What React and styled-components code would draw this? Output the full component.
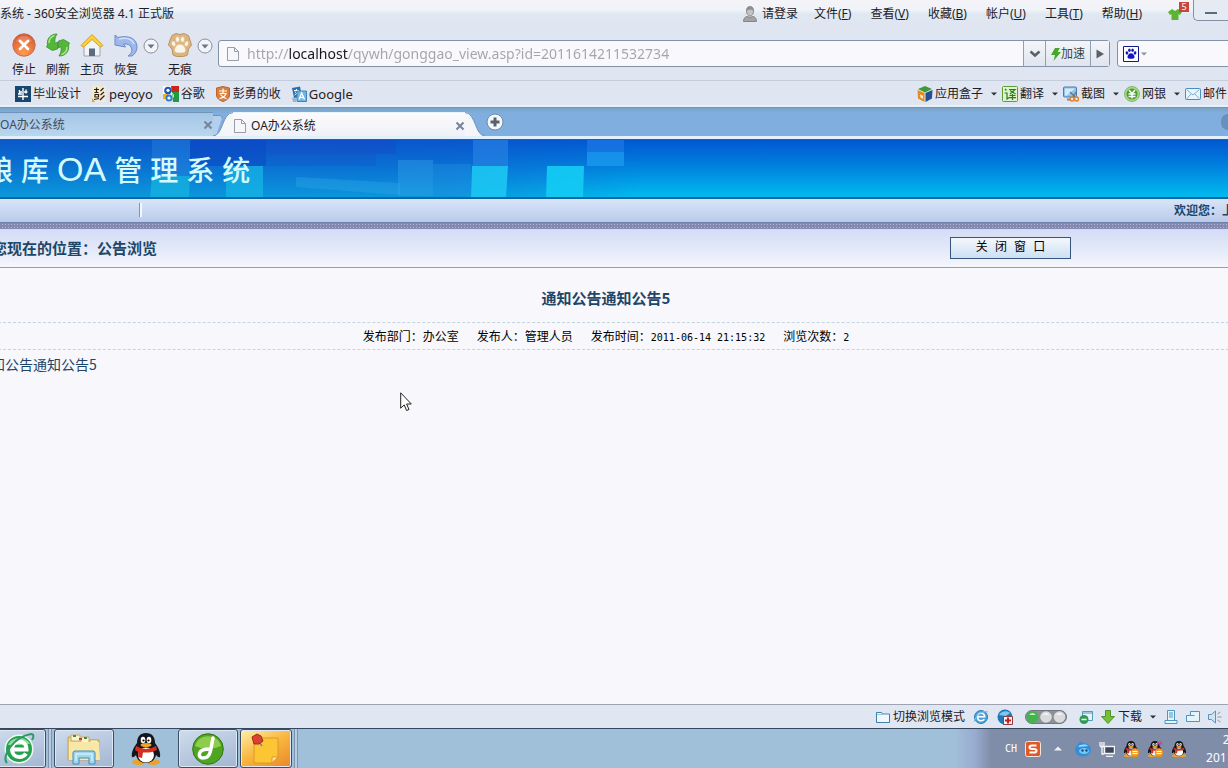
import React from 'react'
import styled, { createGlobalStyle } from 'styled-components'

const GlobalStyle = createGlobalStyle`
  * {
    box-sizing: border-box;
  }
  body {
    margin: 0;
    overflow: hidden;
    font: 12px/16px 'Noto Sans', 'Noto Sans CJK SC', sans-serif;
    color: #1c2026;
    background: #f8f7fb;
  }
  button, input {
    font: inherit;
    color: inherit;
    margin: 0;
    padding: 0;
    border: 0;
    background: none;
  }
  a {
    color: inherit;
    text-decoration: none;
  }
  h1, h2, p {
    margin: 0;
  }
  svg {
    display: block;
    flex: none;
  }
`

/* ---------- icons ---------- */

const Svg = ({ w = 16, h = 16, box, children }) => (
  <svg width={w} height={h} viewBox={box || `0 0 ${w} ${h}`} aria-hidden='true'>
    {children}
  </svg>
)

const UserIcon = () => (
  <Svg>
    <path d='M4.500 5C4.500 1.500 6 .5 8 .5s3.500 1 3.500 4.500C11.500 8 10 10 8 10S4.500 8 4.500 5z' fill='#c3c3c3' stroke='#8e8e8e' />
    <path d='M4.500 4.500C4.500 1.500 6 .5 8 .5s3.500 1 3.500 4L9 3.500z' fill='#8f8f8f' />
    <path d='M1.500 15.500c0-3.500 2-5 4-5l2.500 1 2.500-1c2 0 4 1.500 4 5z' fill='#a4a4a4' stroke='#858585' />
  </Svg>
)

const ShirtIcon = () => (
  <Svg w={14} h={14}>
    <path d='M4 2l3 2 3-2 4 3-2 3-1.500-1V13h-7V7L2 8 0 5z' fill='#5cb431' />
  </Svg>
)

const StopIcon = () => (
  <Svg w={24} h={24}>
    <defs>
      <radialGradient id='stop' cx='.5' cy='.85' r='.8'>
        <stop offset='0' stopColor='#ff9d4d' />
        <stop offset='1' stopColor='#d95a35' />
      </radialGradient>
    </defs>
    <circle cx='12' cy='12' r='11.200' fill='url(#stop)' stroke='#c0705a' />
    <path d='M4 8a9 9 0 0 1 16 0q-8 4-16 0z' fill='#fff' opacity='.2' />
    <path d='M8 8l8 8M16 8l-8 8' stroke='#fff' strokeWidth='2.600' strokeLinecap='round' />
  </Svg>
)

const LeafArrow = () => (
  <>
    <path d='M11 1C4 1 .5 6 1.500 12L.5 14l6 3.500 5-1.500V9L9 10.500C8.500 7 9 4 11 1z' fill='#53b83a' stroke='#3a8f2c' strokeWidth='.8' strokeLinejoin='round' />
    <path d='M3 10C3 6 5 3.500 8.500 2.500' stroke='#a9e58c' strokeWidth='1.500' fill='none' />
  </>
)

const RefreshIcon = () => (
  <Svg w={24} h={24}>
    <LeafArrow />
    <g transform='rotate(180 12 12)'><LeafArrow /></g>
  </Svg>
)

const HomeIcon = () => (
  <Svg w={24} h={24}>
    <path d='M4 11l8-7 8 7v12H4z' fill='#f1f3f7' stroke='#9aa3b0' />
    <path d='M9 15.500h6V23H9z' fill='#5b6b82' />
    <path d='M1 12.500L12 1.500l11 11-2.500 1.500L12 6.500 3.500 14z' fill='#fbcf3f' stroke='#d7a21f' strokeLinejoin='round' />
  </Svg>
)

const UndoIcon = () => (
  <Svg w={24} h={24}>
    <path
      d='M1 2l3 2.500C14 2 23 5 23 14c0 4-2 7-5 9h-4c3-2 4.500-5 3.500-8-1-3-4-4.500-8-4l2 3L1 12z'
      fill='#9db8ec'
      stroke='#6e8ac6'
      strokeLinejoin='round'
    />
    <path d='M5 6c7-1.500 13 0 15 5' stroke='#d3e0fa' strokeWidth='1.500' fill='none' />
  </Svg>
)

const Pads = ({ fill, stroke }) => (
  <g fill={fill} stroke={stroke}>
    <ellipse cx='4' cy='10.500' rx='2.600' ry='3.500' transform='rotate(-20 4 10.500)' />
    <ellipse cx='9' cy='5' rx='2.600' ry='3.700' />
    <ellipse cx='15.500' cy='5' rx='2.600' ry='3.700' />
    <ellipse cx='20.500' cy='10.500' rx='2.600' ry='3.500' transform='rotate(20 20.500 10.500)' />
    <path d='M12.200 11c4 0 7.300 4.500 7.300 8s-3.500 3.500-7.300 3.500S5 22.500 5 19s3.200-8 7.200-8z' />
  </g>
)

const TraceIcon = () => (
  <Svg w={24} h={24}>
    <path d='M4 2.500L8 .5l4 1 4-1 4.500 2L22 7l1.500 5-3 4-1 6-4 1.500h-7L5 22l-1-6-3.500-4L2 7z' fill='#dbb581' stroke='#bd9563' strokeLinejoin='round' />
    <g transform='translate(2.500 2.500) scale(.78)'>
      <Pads fill='#fdf6e8' stroke='#dcb984' />
    </g>
  </Svg>
)

const BaiduIcon = () => (
  <Svg>
    <path d='M.5.5h15v15H.5z' fill='#fff' stroke='#101a8c' />
    <g transform='translate(2 1.800) scale(.49)'>
      <Pads fill='#1414c8' />
    </g>
  </Svg>
)

const RoundArrow = () => (
  <Svg>
    <circle cx='8' cy='8' r='7' fill='#f2f4f8' stroke='#8590a3' />
    <path d='M4.500 6.500h7L8 10.500z' fill='#6a7688' />
  </Svg>
)

const PageIcon = () => (
  <Svg w={14} h={16}>
    <path d='M1.500 1.500h7l4 4v9h-11z' fill='#f6f7fb' stroke='#989da8' />
    <path d='M8.500 1.500v4h4' fill='none' stroke='#989da8' />
  </Svg>
)

const Caret = ({ color = '#2b3038' }) => (
  <Svg w={6} h={4}>
    <path d='M0 .5h6l-3 3z' fill={color} />
  </Svg>
)

const ChevronIcon = () => (
  <Svg w={12} h={8}>
    <path d='M1.500 1.500L6 5.500l4.500-4' stroke='#5a6068' strokeWidth='2.500' fill='none' />
  </Svg>
)

const BoltIcon = () => (
  <Svg w={10} h={14}>
    <path d='M4 1h5L6.500 5H10L2.500 14 4 8H0z' fill='#46a82b' />
  </Svg>
)

const PlayIcon = () => (
  <Svg w={8} h={10}>
    <path d='M.5.5L8 5 .5 9.500z' fill='#5a6068' />
  </Svg>
)

const CloseIcon = () => (
  <Svg w={10} h={10}>
    <path d='M1.500 1.500l7 7M8.500 1.500l-7 7' stroke='#76839a' strokeWidth='2' />
  </Svg>
)

const PlusIcon = () => (
  <Svg w={18} h={18}>
    <circle cx='9' cy='9' r='8' fill='#f4f8fc' stroke='#7089a8' />
    <path d='M9 4.500v9M4.500 9h9' stroke='#56606f' strokeWidth='3' />
  </Svg>
)

const DesignMark = () => (
  <Svg>
    <path d='M0 0h16v16H0z' fill='#17476f' />
    <path d='M8 2v12M3 10.500h10M4.500 4v4M4.500 6H7M11 3.500v4M9 6h3.500M3 8h4' stroke='#fff' strokeWidth='1.400' />
  </Svg>
)

const PengMark = () => (
  <Svg>
    <path d='M1 0h14v16H1z' fill='#f3ead2' />
    <path d='M3 3.500h5M5.500 1.500v5M3.500 6.500h4M4 8.500h3.500v2.500H4zM3 13.500l5-1M12.500 2L9.500 5M13 6l-3.500 3M13.500 9.500L9 14' stroke='#2e2013' strokeWidth='1.200' fill='none' />
    <path d='M1 12l3 4H1z' fill='#dba43e' />
  </Svg>
)

const GoogleMark = () => (
  <Svg>
    <path d='M0 0h8v8H0z' fill='#fff' />
    <path d='M8 0h8v6H9z' fill='#c9261c' />
    <path d='M9 6h7v10h-6z' fill='#219a41' />
    <path d='M0 8h5v5H0z' fill='#f0b51d' />
    <circle cx='5' cy='4.500' r='3.800' fill='#2257b5' />
    <circle cx='5' cy='4.300' r='1.600' fill='#fff' />
    <circle cx='6' cy='12' r='3.500' fill='#2d7fc7' />
    <circle cx='6' cy='12' r='1.600' fill='#fff' />
    <path d='M8 6.500c2 1 3 3 2 5' stroke='#fff' fill='none' />
  </Svg>
)

const AlipayMark = () => (
  <Svg>
    <path d='M1.500 2L8 .5 14.500 2v7c0 3-3 5.500-6.500 6.500C4.500 14.500 1.500 12 1.500 9z' fill='#d9803f' stroke='#b9652c' />
    <path d='M4 5h8M8 2.500V7M4.500 7.500h6.500C10 10 8 12 4.500 12.500M5.500 8.500c1.500 2 3.500 3.500 6 4' stroke='#fff' strokeWidth='1.200' fill='none' />
  </Svg>
)

const TranslateMark = () => (
  <Svg>
    <path d='M1 2l8-1.500 2 10L3 12z' fill='#2b6fae' />
    <path d='M3 4.500h5M5.500 3v1.500M7 5c-.5 2-2 3.500-3.500 4M4 5.500c1 2 2 3 4 3.500' stroke='#fff' fill='none' />
    <path d='M6 5h9.500v10.500H6z' fill='#6fb6e2' stroke='#3f86bd' />
    <path d='M8 13.500L10.700 7l2.800 6.500M9 11.500h3.500' stroke='#fff' strokeWidth='1.300' fill='none' />
    <path d='M1 11.500l4 1V16H2z' fill='#9fb3c4' />
  </Svg>
)

const BoxIcon = () => (
  <Svg>
    <path d='M8 0l7 3-7 3.500L1 3z' fill='#3d9b35' />
    <path d='M.5 4L7.500 7v9L1 12.500z' fill='#e88a22' />
    <path d='M15.500 4L8.500 7v9l6.500-3.500z' fill='#23508f' />
    <path d='M3 8.500l3 1.300v3L3.500 11.500z' fill='#fff2d8' />
  </Svg>
)

const YiIcon = () => (
  <Svg>
    <rect x='.5' y='.5' width='15' height='15' rx='1' fill='#dff3cf' stroke='#5c9e3a' />
    <path d='M3 3l1.500 1.500M2.500 7H5v6l2-1.500M7 3.500h6L8 8M8 4.500l5.500 3.500M7.500 9.500h6M7 11.700h7M10.500 8v6' stroke='#2f7a1c' strokeWidth='1.200' fill='none' />
  </Svg>
)

const ShotIcon = () => (
  <Svg>
    <rect x='.5' y='1' width='13' height='10' rx='1' fill='#8fc3ea' stroke='#4a7fac' />
    <path d='M2 2.500h10L4 9.500H2z' fill='#d2e9f9' />
    <path d='M4 13.500h4' stroke='#6a8cab' strokeWidth='2' />
    <path d='M7 6l5 5M13 6l-3 5' stroke='#61758a' strokeWidth='1.400' />
    <circle cx='9' cy='13' r='2' fill='none' stroke='#e5822c' strokeWidth='1.500' />
    <circle cx='13.500' cy='13' r='2' fill='none' stroke='#e5822c' strokeWidth='1.500' />
  </Svg>
)

const BankIcon = () => (
  <Svg>
    <circle cx='8' cy='8' r='7.500' fill='#a7d68a' stroke='#86b86e' />
    <circle cx='8' cy='8' r='5.500' fill='#48a02c' />
    <path d='M5 4l3 3.500L11 4M4.500 8h7M4.500 10.500h7M8 7.500v5' stroke='#fff' strokeWidth='1.500' fill='none' />
  </Svg>
)

const MailIcon = () => (
  <Svg>
    <rect x='.5' y='2.500' width='15' height='11' rx='1' fill='#e9f4fc' stroke='#4a8ebb' />
    <path d='M1.500 3.500L8 9l6.500-5.500M1.500 13l4.500-5M14.500 13L10 8' stroke='#7db0d4' fill='none' />
  </Svg>
)

const FolderIcon = () => (
  <Svg w={14} h={12}>
    <path d='M.5 1.500h5l1 1.500h7v8.500H.5z' fill='#f1f8fd' stroke='#3f7fa9' />
    <path d='M1 3.500h12' stroke='#9cc6e2' />
  </Svg>
)

const IeIcon = () => (
  <Svg>
    <circle cx='8' cy='8' r='6.500' fill='#4aa5dc' stroke='#2d7fb8' />
    <path d='M4.500 7.800h7.200C11.500 5.500 10 4.300 8 4.300S4.500 6 4.500 8s1.300 3.700 3.500 3.700c1.500 0 2.500-.5 3.300-1.500' stroke='#fff' strokeWidth='1.500' fill='none' />
    <path d='M1 13C3 6 10 1 15 3' stroke='#7fc4ea' fill='none' />
  </Svg>
)

const RepairIcon = () => (
  <Svg>
    <circle cx='8' cy='8' r='7.500' fill='#2177b8' />
    <path d='M2 6c2-4 8-5 11-2L9 7z' fill='#7cc6ef' />
    <path d='M6.500 7.500h9v8h-9z' fill='#f4f4f4' stroke='#8b3b3b' />
    <path d='M11 8.500v6M8 11.500h6' stroke='#c81e1e' strokeWidth='2' />
  </Svg>
)

const LightsIcon = () => (
  <Svg w={42} h={14}>
    <rect x='.5' y='.5' width='41' height='13' rx='6.500' fill='#8c9197' stroke='#73787e' />
    <circle cx='7.500' cy='7' r='6' fill='#3fb64a' />
    <circle cx='21' cy='7' r='5.800' fill='#d9dbde' />
    <circle cx='34.500' cy='7' r='5.800' fill='#d9dbde' />
    <path d='M4 5q3.500-4 7 0zM17.500 5q3.500-4 7 0zM31 5q3.500-4 7 0z' fill='#fff' opacity='.7' />
  </Svg>
)

const BlockIcon = () => (
  <Svg w={14} h={14}>
    <path d='M3.500 1.500h10v9h-10z' fill='#e3f3fb' stroke='#4f9cb9' />
    <path d='M3.500 3h10' stroke='#4f9cb9' />
    <circle cx='5' cy='9.500' r='4.500' fill='#2f9a55' />
    <path d='M2.500 9.500h5' stroke='#fff' strokeWidth='1.500' />
  </Svg>
)

const DownIcon = () => (
  <Svg w={14} h={14}>
    <path d='M4.500.5h5v6h4L7 13.500.5 6.500h4z' fill='#76bf38' stroke='#4f9425' />
  </Svg>
)

const ListIcon = () => (
  <Svg w={14} h={14}>
    <path d='M3.500.5h7v10h-7zM1 10.500h12v3H1z' fill='#e6f4fc' stroke='#4e96c4' />
    <path d='M5 3h4M5 5h4M5 7h4' stroke='#4e96c4' />
  </Svg>
)

const SplitIcon = () => (
  <Svg w={14} h={14}>
    <path d='M4.500 1.500h9v10h-13v-6h4z' fill='#e6f4fc' stroke='#4e96c4' />
    <path d='M4.500 1.500v4h4' stroke='#4e96c4' fill='none' />
  </Svg>
)

const SoundIcon = () => (
  <Svg w={14} h={14}>
    <path d='M.5 4.500h3l4-3.500v12l-4-3.500h-3z' fill='#cfe5f3' stroke='#5f93b6' />
    <path d='M9.500 4l3-2M9.500 7h4M9.500 10l3 2' stroke='#8b98a4' />
  </Svg>
)

const SafeBrowserIcon = () => (
  <Svg w={32} h={32}>
    <circle cx='16' cy='16' r='14.500' fill='#eefaf0' />
    <circle cx='16' cy='16' r='13' fill='#24a14c' />
    <path d='M5 12C8 4 22 2 27 11l-10 1z' fill='#8edd9f' />
    <path d='M9 16.500h14.500C23.500 11 20 8.500 16 8.500S9 12 9 16.500 12 24 16.500 24c3 0 5-1 6.500-3.500' stroke='#fff' strokeWidth='4' fill='none' />
    <path d='M4 30C-2 24 10 4 28 1c3 0 3 3 1 6' stroke='#2f9b62' strokeWidth='2' fill='none' />
  </Svg>
)

const ExplorerIcon = () => (
  <Svg w={34} h={32}>
    <path d='M1 4h10l2 3h19v20H1z' fill='#eed48a' stroke='#c2a258' />
    <path d='M4 2h9v6H4zM14 4h8v6h-8zM23 7h8v4h-8z' fill='#fbf3d0' stroke='#c7ab66' />
    <path d='M6 3h3M17 5h3' stroke='#4f8a3c' strokeWidth='2' />
    <path d='M12 6h3' stroke='#b9452f' strokeWidth='2' />
    <path d='M2 9h30l1 18H2z' fill='#f8e7a6' />
    <path d='M6 31V20q0-2 2-2h18q2 0 2 2v11h-6v-6H12v6z' fill='#9fd5ee' stroke='#3f8fb8' />
    <path d='M9 28v-7h16v7' stroke='#e9f9ff' fill='none' />
  </Svg>
)

const Penguin = ({ size = 16, badge }) => (
  <Svg w={size} h={size} box='0 0 32 32'>
    <ellipse cx='9' cy='29' rx='7' ry='3' fill='#e9a22a' />
    <ellipse cx='23' cy='29' rx='7' ry='3' fill='#e9a22a' />
    <path d='M16 0c6 0 9 4 9 10 3 4 6 9 5 14-1 1-3-1-4-2-1 5-5 8-10 8S7 27 6 22c-1 1-3 3-4 2-1-5 2-10 5-14 0-6 3-10 9-10z' fill='#15161c' />
    <ellipse cx='16' cy='22' rx='8' ry='7.500' fill='#fff' />
    <ellipse cx='13' cy='7' rx='2.300' ry='3.200' fill='#fff' />
    <ellipse cx='19' cy='7' rx='2.300' ry='3.200' fill='#fff' />
    <circle cx='13.500' cy='7.500' r='1.100' />
    <circle cx='18.500' cy='7.500' r='1.100' />
    <ellipse cx='16' cy='12' rx='5.500' ry='2' fill='#f0a51f' />
    <path d='M6 13q10 6 20 0l1 4q-5 3-14 2.500l-1 5.500-4-1 .5-5L5 17z' fill='#d22f22' />
    {badge && <circle cx='24' cy='23' r='8' fill='#f3a52d' stroke='#c2741b' />}
    {badge && <path d='M19 21h10M19 25h10' stroke='#fff' strokeWidth='2' />}
    {badge === 'pink' && <path d='M20 1l5 3 5-4v8l-5-2-5 2z' fill='#d23fa2' />}
  </Svg>
)

const MusicIcon = () => (
  <Svg w={32} h={32}>
    <circle cx='16' cy='16' r='15.300' fill='#4ea51f' stroke='#2f7412' />
    <path d='M3 13C6 0 26 0 29 13q-13 6-26 0z' fill='#a4db5c' opacity='.75' />
    <path d='M21 5l-2.500 13c-1 5-4 7-7.500 7-3 0-4-2-3.500-4.500.6-3 4-4.500 10.500-4.500' fill='none' stroke='#fff' strokeWidth='3.500' strokeLinecap='round' />
  </Svg>
)

const NoteIcon = () => (
  <Svg w={32} h={32}>
    <path d='M4 5h24v19l-6 6H4z' fill='#fbc534' stroke='#e0962a' />
    <path d='M28 24h-6v6z' fill='#fde79b' stroke='#e0962a' />
    <path d='M9 9l3 4' stroke='#7b8794' strokeWidth='1.500' />
    <path d='M2 4l5-3 4 2 2 5-4 3-5 0z' fill='#d8422e' stroke='#a52b1f' />
  </Svg>
)

const SogouIcon = () => (
  <Svg>
    <rect x='.5' y='.5' width='15' height='15' rx='2' fill='#df5a27' stroke='#f6e5dc' />
    <path d='M11.500 4.500H7Q4.500 4.500 4.500 6.200T7 8h2q2.500 0 2.500 1.800T9 11.500H4.500' stroke='#fff' strokeWidth='2' fill='none' />
  </Svg>
)

const AliIcon = () => (
  <Svg>
    <path d='M8 2c5 0 8 3 8 7s-4 6.500-8 6.500S0 13 0 9c0-2 1-4 2.500-5L5 .5 8 2z' fill='#2f8fdb' />
    <path d='M3 6c2-3 8-3 10-1z' fill='#a5dbf8' />
    <ellipse cx='9' cy='10' rx='5' ry='3' fill='#7cc6f0' />
    <circle cx='7.500' cy='9.500' r='1.200' fill='#15507f' />
    <circle cx='11.500' cy='9.500' r='1.200' fill='#15507f' />
  </Svg>
)

const NetworkIcon = () => (
  <Svg>
    <path d='M5.500 5.500h10v7h-10z' fill='#3b4658' stroke='#f2f4f8' strokeWidth='1.500' />
    <path d='M7 15.300h7M1 1v3q0 2 2 2t2-2V1M3 1v12h2' stroke='#f2f4f8' strokeWidth='1.300' fill='none' />
  </Svg>
)

/* ---------- browser frame ---------- */

const Window = styled.div`
  display: flex;
  flex-direction: column;
  height: 100vh;
  overflow: hidden;
`

const TitleBar = styled.header`
  display: flex;
  align-items: center;
  height: 28px;
  overflow: hidden;
  background: linear-gradient(#f5f4f8 0, #f0f3f8 10px, #dfe8f1 14px, #dfe5f1);
`

const Caption = styled.h1`
  flex: 1;
  font-size: 12px;
  font-weight: 400;
  white-space: nowrap;
`

const Menu = styled.nav`
  display: flex;
  align-items: center;
  gap: 19px;
  margin-left: 16px;
`

const MenuItem = styled.button`
  display: flex;
  align-items: center;
  gap: 4px;
  white-space: nowrap;
`

const ShirtButton = styled.button`
  position: relative;
  margin: 0 11px 0 26px;
`

const Count = styled.span`
  position: absolute;
  top: -5px;
  left: 11px;
  width: 10px;
  height: 10px;
  font-size: 9px;
  line-height: 10px;
  text-align: center;
  color: #fff;
  background: #c8463c;
`

const Minimize = styled.button`
  display: flex;
  align-items: center;
  justify-content: center;
  align-self: flex-start;
  width: 35px;
  height: 21px;
  border: 1px solid #8390a3;
  border-width: 0 0 1px 1px;
  border-radius: 0 0 0 5px;
  background: #e6ebf3;
  &::after {
    content: '';
    width: 12px;
    height: 2px;
    margin-top: 6px;
    background: #5d6a80;
  }
`

const ToolBar = styled.div`
  display: flex;
  height: 53px;
  padding-left: 7px;
  overflow: hidden;
  background: #dfe5f1;
  border-bottom: 1px solid #c3cddc;
`

const Tool = styled.button`
  display: flex;
  flex-direction: column;
  align-items: center;
  gap: 5px;
  width: 34px;
  padding-top: 5px;
  white-space: nowrap;
`

const ToolMore = styled.button`
  align-self: flex-start;
  padding-top: 10px;
  margin-right: ${({ $gap }) => $gap}px;
`

const AddressBox = styled.div`
  display: flex;
  align-items: center;
  flex: ${({ $grow }) => ($grow ? '1' : '0 0 118px')};
  height: 27px;
  margin: 12px ${({ $grow }) => ($grow ? 7 : -7)}px 0 0;
  padding-left: ${({ $grow }) => ($grow ? 7 : 5)}px;
  gap: ${({ $grow }) => ($grow ? 0 : 2)}px;
  border: 1px solid #8292a8;
  border-radius: 3px;
  background: #f9f8fc;
`

const UrlInput = styled.input`
  flex: 1;
  min-width: 0;
  height: 24px;
  margin-left: 7px;
  font-size: 14px;
  outline: 0;
  color: transparent;
  background: linear-gradient(90deg, #a3a5a8 42px, #16181c 42px, #16181c 101px, #a3a5a8 101px);
  background-clip: text;
`

const SearchInput = styled.input`
  width: 80px;
  outline: 0;
`

const BoxButton = styled.button`
  display: flex;
  align-items: center;
  justify-content: center;
  align-self: stretch;
  width: ${({ $w }) => $w}px;
  border-left: 1px solid #8fa0b4;
  white-space: nowrap;
  color: #3c4148;
  background: linear-gradient(#f4f5f9, #dfe5ee);
`

const BookmarkBar = styled.nav`
  display: flex;
  align-items: center;
  justify-content: space-between;
  height: 26px;
  padding: 2px 0 0 15px;
  overflow: hidden;
  background: #e0e6f1;
  border-bottom: 2px solid #e6f2fb;
`

const Bookmarks = styled.div`
  display: flex;
  gap: 10px;
`

const AppLinks = styled.div`
  display: flex;
  gap: 5px;
  flex: 0 0 311px;
  min-width: 0;
`

const Bookmark = styled.a`
  display: flex;
  align-items: center;
  gap: 2px;
  white-space: nowrap;
  font-size: ${({ $latin }) => ($latin ? 13 : 12)}px;
`

const AppLink = styled.button`
  display: flex;
  flex: none;
  align-items: center;
  gap: 2px;
  white-space: nowrap;
  > svg + span {
    margin-right: 6px;
  }
`

const TabBar = styled.div`
  display: flex;
  align-items: flex-end;
  height: 32px;
  overflow: hidden;
  border-top: 1px solid #7492b2;
  border-bottom: 3px solid #e2f0fb;
  background: linear-gradient(#7ba2c6 0, #80aede 5px);
`

const Tab = styled.div`
  display: flex;
  align-items: center;
  width: ${({ $active }) => ($active ? 232 : 213)}px;
  height: ${({ $active }) => ($active ? 27 : 24)}px;
  margin-bottom: ${({ $active }) => ($active ? -3 : 0)}px;
  border-top: 1px solid ${({ $active }) => ($active ? '#e9f3fb' : '#6f93ba')};
  background: ${({ $active }) => ($active ? 'linear-gradient(#fbfbfd, #edf0f6)' : 'linear-gradient(#a5c6e6, #bad6ef)')};
  color: ${({ $active }) => ($active ? '#1c2026' : '#3d4c60')};
  a {
    flex: 1;
    margin-left: ${({ $active }) => ($active ? 4 : 0)}px;
  }
`

const NewTab = styled.button`
  align-self: center;
  margin-left: 1px;
`

const TabMore = styled.button`
  align-self: center;
  width: 7px;
  height: 16px;
  margin-left: auto;
  border-radius: 8px 0 0 8px;
  background: #6790bd;
`

const EdgeSvg = styled.svg`
  margin-bottom: -3px;
`

const TabEdge = ({ flip }) => (
  <EdgeSvg width='20' height='27' viewBox='0 0 20 27' aria-hidden='true'>
    <g transform={flip ? 'matrix(-1 0 0 1 20 0)' : undefined}>
      {!flip && <path d='M0 3h7q3 0 2 3L3 24H0z' fill='#b2d0ed' />}
      {!flip && <path d='M0 3.500h7q3 0 2 3' fill='none' stroke='#6f93ba' />}
      <path d='M0 24C10 24 9 1 20 0v27H0z' fill='#f5f6fa' />
      <path d='M0 24C10 24 9 1 20 .5' fill='none' stroke='#6f93b8' />
    </g>
  </EdgeSvg>
)

/* ---------- OA page ---------- */

const Page = styled.main`
  flex: 1;
  min-height: 0;
  margin: 0 -16px 0 -32px;
  font-family: 'Noto Sans CJK SC', sans-serif;
  color: #1d4668;
`

const Banner = styled.div`
  position: relative;
  height: 60px;
  padding-left: 17px;
  overflow: hidden;
  border-top: 1px solid #2560a4;
  border-bottom: 2px solid #0b66a8;
  background: linear-gradient(#0058d2, #0080de 45%, #00bbee);
`

const BannerArt = styled.svg`
  position: absolute;
  top: 0;
  left: 32px;
`

const Brand = styled.h2`
  position: relative;
  display: flex;
  align-items: center;
  gap: 8px;
  height: 58px;
  font-size: 28px;
  font-weight: 500;
  line-height: 32px;
  color: #d3fbff;
  b {
    font: 400 34px/36px 'Liberation Sans', sans-serif;
  }
`

const Strip = styled.div`
  display: flex;
  align-items: center;
  justify-content: space-between;
  height: 23px;
  padding: 0 10px 2px 171px;
  font-weight: 700;
  background: linear-gradient(#d8e4f8, #c6d6f1 60%, #b9caea);
  &::before {
    content: '';
    width: 2px;
    height: 14px;
    border-left: 1px solid #8793ac;
    background: #f2f6fd;
  }
`

const Dots = styled.div`
  height: 7px;
  border-top: 1px solid #6f80ab;
  background: radial-gradient(#b3b9d2 1px, transparent 1px) 0 0 / 3px 3px #8489b2;
`

const Crumb = styled.div`
  display: flex;
  align-items: center;
  justify-content: space-between;
  height: 39px;
  padding: 0 173px 0 24px;
  border-bottom: 1px solid #9b9ca6;
  font-size: 15px;
  font-weight: 700;
  background: linear-gradient(#d3dcf5, #e6ebf9 60%, #f6f6fc);
`

const CloseWindow = styled.button`
  width: 121px;
  height: 22px;
  border: 1px solid #35557f;
  font: 12px/20px 'Liberation Mono', 'Noto Sans CJK SC', monospace;
  color: #000;
  background: linear-gradient(#f4f8fd, #cde0f2);
`

const NoticeTitle = styled.h2`
  padding: 20px 0 14px;
  font-size: 15px;
  line-height: 20px;
  text-align: center;
  border-bottom: 1px dashed #c3d5de;
`

const Meta = styled.div`
  display: flex;
  align-items: center;
  justify-content: center;
  gap: 18px;
  height: 27px;
  color: #000;
  border-bottom: 1px dashed #c3d5de;
  time, b {
    font: 10px 'DejaVu Sans Mono', monospace;
  }
`

const Body = styled.p`
  padding: 4px 9px;
  font-size: 14px;
  line-height: 20px;
`

const Pointer = styled.svg`
  position: absolute;
  top: 392px;
  left: 400px;
`

/* ---------- status bar and taskbar ---------- */

const StatusBar = styled.footer`
  display: flex;
  align-items: center;
  justify-content: flex-end;
  gap: 8px;
  height: 24px;
  padding-right: 6px;
  border-top: 1px solid #9da3b0;
  background: #e0e6f2;
`

const StatusItem = styled.button`
  display: flex;
  align-items: center;
  gap: 3px;
  margin-left: ${({ $space }) => ($space ? 4 : 0)}px;
  white-space: nowrap;
`

const TaskBar = styled.div`
  display: flex;
  height: 40px;
  overflow: hidden;
  border-top: 1px solid #35465f;
  background: #a0bfd9;
`

const Task = styled.button`
  display: flex;
  align-items: center;
  justify-content: center;
  flex: none;
  width: ${({ $w }) => $w}px;
  margin-left: ${({ $shift }) => $shift || 0}px;
  border: 1px solid ${({ $kind }) => ($kind === 'idle' ? 'transparent' : '#3d4d66')};
  border-radius: 3px;
  box-shadow: ${({ $kind }) => ($kind === 'idle' ? 'none' : 'inset 0 0 0 1px #dfe8f3')};
  background: ${({ $kind }) =>
    ({
      idle: 'none',
      open: 'linear-gradient(160deg, #cfdcec, #a2b6d3)',
      alert: 'linear-gradient(150deg, #fff0a8, #f8b53c 50%, #e8872c)'
    }[$kind])};
`

const Divider = styled.span`
  width: 4px;
  margin: 0 2px;
  border: 1px solid #7d93b0;
  border-width: 0 1px;
  background: #b9cde2;
`

const Tray = styled.div`
  display: flex;
  align-items: center;
  gap: 8px;
  width: 273px;
  margin-left: auto;
  padding-left: 50px;
  background: linear-gradient(90deg, #a0bfd9, #99abd0 20px, #808da9 36px);
`

const Lang = styled.span`
  font: 10px 'DejaVu Sans Mono', monospace;
  color: #fff;
`

const Up = styled.button`
  margin: 0 5px;
`

const Clock = styled.time`
  flex: none;
  margin-left: 11px;
  text-align: center;
  color: #fff;
  line-height: 18px;
`

const menu = [
  ['文件', 'F'],
  ['查看', 'V'],
  ['收藏', 'B'],
  ['帐户', 'U'],
  ['工具', 'T'],
  ['帮助', 'H']
]

const bookmarks = [
  [DesignMark, '毕业设计'],
  [PengMark, 'peyoyo', true],
  [GoogleMark, '谷歌'],
  [AlipayMark, '彭勇的收'],
  [TranslateMark, 'Google', true]
]

const apps = [
  [BoxIcon, '应用盒子'],
  [YiIcon, '翻译'],
  [ShotIcon, '截图'],
  [BankIcon, '网银'],
  [MailIcon, '邮件']
]

const Browser = () => (
  <>
    <TitleBar>
      <Caption>系统 - 360安全浏览器 4.1 正式版</Caption>
      <MenuItem><UserIcon />请登录</MenuItem>
      <Menu>
        {menu.map(([name, key]) => (
          <MenuItem key={key}><span>{name}(<u>{key}</u>)</span></MenuItem>
        ))}
      </Menu>
      <ShirtButton aria-label='皮肤'><ShirtIcon /><Count>5</Count></ShirtButton>
      <Minimize aria-label='最小化' />
    </TitleBar>
    <ToolBar>
      <Tool><StopIcon />停止</Tool>
      <Tool><RefreshIcon />刷新</Tool>
      <Tool><HomeIcon />主页</Tool>
      <Tool><UndoIcon />恢复</Tool>
      <ToolMore $gap={4} aria-label='恢复列表'><RoundArrow /></ToolMore>
      <Tool><TraceIcon />无痕</Tool>
      <ToolMore $gap={5} aria-label='无痕选项'><RoundArrow /></ToolMore>
      <AddressBox $grow>
        <PageIcon />
        <UrlInput aria-label='地址' defaultValue='http://localhost/qywh/gonggao_view.asp?id=2011614211532734' />
        <BoxButton $w={22} aria-label='历史地址'><ChevronIcon /></BoxButton>
        <BoxButton $w={45}><BoltIcon />加速</BoxButton>
        <BoxButton $w={19} aria-label='更多'><PlayIcon /></BoxButton>
      </AddressBox>
      <AddressBox>
        <BaiduIcon />
        <Caret color='#8a8f99' />
        <SearchInput aria-label='搜索' />
      </AddressBox>
    </ToolBar>
    <BookmarkBar>
      <Bookmarks>
        {bookmarks.map(([Icon, name, latin]) => (
          <Bookmark key={name} href='#' $latin={latin}><Icon />{name}</Bookmark>
        ))}
      </Bookmarks>
      <AppLinks>
        {apps.map(([Icon, name]) => (
          <AppLink key={name}><Icon /><span>{name}</span><Caret /></AppLink>
        ))}
      </AppLinks>
    </BookmarkBar>
    <TabBar>
      <Tab>
        <a href='#'>OA办公系统</a>
        <button aria-label='关闭标签'><CloseIcon /></button>
      </Tab>
      <TabEdge />
      <Tab $active>
        <PageIcon />
        <a href='#'>OA办公系统</a>
        <button aria-label='关闭标签'><CloseIcon /></button>
      </Tab>
      <TabEdge flip />
      <NewTab aria-label='新标签'><PlusIcon /></NewTab>
      <TabMore aria-label='标签列表' />
    </TabBar>
  </>
)

const Notice = () => (
  <Page>
    <Banner>
      <BannerArt width='640' height='58' viewBox='0 0 640 58' aria-hidden='true'>
        <defs>
          <linearGradient id='haze'>
            <stop offset='0' stopColor='#1d59b8' />
            <stop offset='.7' stopColor='#1c50c0' />
            <stop offset='1' stopColor='#1c50c0' stopOpacity='0' />
          </linearGradient>
        </defs>
        <path d='M0 0h640v58H0z' fill='url(#haze)' opacity='.35' />
        <path d='M152 0h38v36h-38z' fill='#2a86e2' opacity='.4' />
        <path d='M152 36h38l-1 22h-39z' fill='#14b0e0' opacity='.8' />
        <path d='M190 0h76v26h-76z' fill='#0a3fc0' opacity='.5' />
        <path d='M226 26h37v32h-37z' fill='#16b4e4' opacity='.75' />
        <path d='M266 0h130v14H266z' fill='#1a44c4' opacity='.35' />
        <path d='M266 14h110v12H266z' fill='#1a44c4' opacity='.2' />
        <path d='M296 37l104 6v12l-104-8z' fill='#3cb0ea' opacity='.3' />
        <path d='M398 20h35v36h-35z' fill='#35a4e8' opacity='.4' />
        <path d='M433 24h38v32h-38z' fill='#2494e2' opacity='.35' />
        <path d='M473 0h35v26h-35z' fill='#2c86e6' opacity='.6' />
        <path d='M472 26h36l-2 32h-35z' fill='#1cc6f2' opacity='.9' />
        <path d='M547 26h37l-1 32h-37z' fill='#14ccf4' opacity='.9' />
        <path d='M587 0h37v12h-37z' fill='#1c76e4' opacity='.8' />
        <path d='M587 12h37v14h-37z' fill='#1a9aee' opacity='.8' />
      </BannerArt>
      <Brand><span>粮</span><span>库</span><b>OA</b><span>管</span><span>理</span><span>系</span><span>统</span></Brand>
    </Banner>
    <Strip>欢迎您：上</Strip>
    <Dots />
    <Crumb>
      <span>您现在的位置：公告浏览</span>
      <CloseWindow>关 闭 窗 口</CloseWindow>
    </Crumb>
    <NoticeTitle>通知公告通知公告5</NoticeTitle>
    <Meta>
      <span>发布部门：办公室</span>
      <span>发布人：管理人员</span>
      <span>发布时间：<time>2011-06-14 21:15:32</time></span>
      <span>浏览次数：<b>2</b></span>
    </Meta>
    <Body>通知公告通知公告5</Body>
  </Page>
)

const Desktop = () => (
  <>
    <StatusBar>
      <StatusItem><FolderIcon />切换浏览模式</StatusItem>
      <StatusItem aria-label='兼容模式'><IeIcon /></StatusItem>
      <StatusItem aria-label='修复'><RepairIcon /></StatusItem>
      <StatusItem $space aria-label='安全状态'><LightsIcon /></StatusItem>
      <StatusItem $space aria-label='拦截'><BlockIcon /></StatusItem>
      <StatusItem><DownIcon />下载</StatusItem>
      <Caret />
      <StatusItem aria-label='任务'><ListIcon /></StatusItem>
      <StatusItem aria-label='分屏'><SplitIcon /></StatusItem>
      <StatusItem aria-label='声音'><SoundIcon /></StatusItem>
    </StatusBar>
    <TaskBar>
      <Task $w={54} $shift={-8} $kind='open' aria-label='浏览器'><SafeBrowserIcon /></Task>
      <Divider />
      <Task $w={60} $kind='open' aria-label='资源管理器'><ExplorerIcon /></Task>
      <Task $w={64} $kind='idle' aria-label='QQ'><Penguin size={32} /></Task>
      <Task $w={60} $kind='open' aria-label='音乐'><MusicIcon /></Task>
      <Task $w={52} $shift={2} $kind='alert' aria-label='便笺'><NoteIcon /></Task>
      <Divider />
      <Tray>
        <Lang>CH</Lang>
        <SogouIcon />
        <Up aria-label='显示隐藏的图标'>
          <Svg w={8} h={5}><path d='M0 4.500L4 .5l4 4z' fill='#eef1f6' /></Svg>
        </Up>
        <AliIcon />
        <NetworkIcon />
        <Penguin badge='gold' />
        <Penguin badge='pink' />
        <Penguin />
        <Clock>21:16<br />2011/06/14</Clock>
      </Tray>
    </TaskBar>
  </>
)

const App = () => (
  <Window>
    <GlobalStyle />
    <Browser />
    <Notice />
    <Desktop />
    <Pointer width='12' height='20' viewBox='0 0 12 20' aria-hidden='true'>
      <path d='M.7.8v15.400l3.500-3.300 2.400 5.600 2.400-1-2.400-5.500h4.700z' fill='#fff' stroke='#222' />
    </Pointer>
  </Window>
)

export default App
